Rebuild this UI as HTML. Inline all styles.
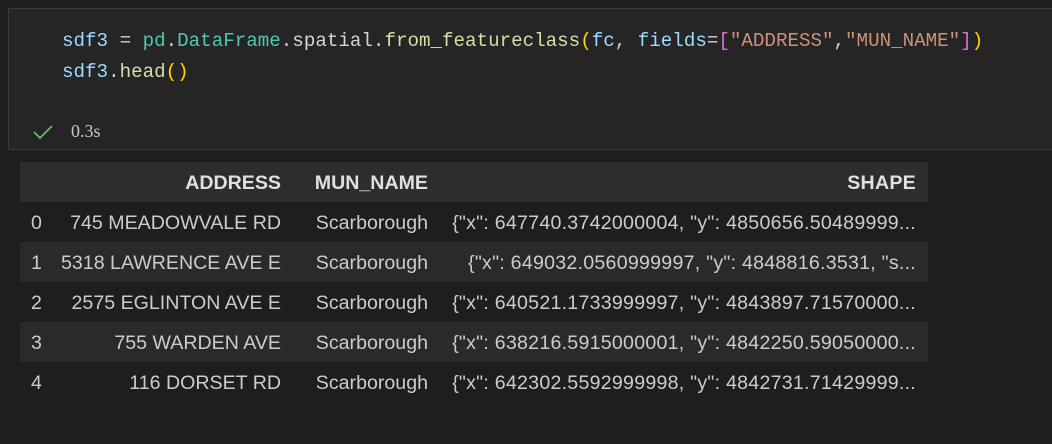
<!DOCTYPE html>
<html><head><style>
body{margin:0;width:1052px;height:444px;background:#1e1e1e;overflow:hidden;position:relative;font-family:"Liberation Sans",sans-serif;}
.cell{position:absolute;left:8px;top:8px;width:1060px;height:140px;background:#252526;border:1px solid #3a3a3a;}
.code{position:absolute;left:62px;top:26px;font-family:"Liberation Mono",monospace;font-size:19.2px;line-height:31px;color:#d4d4d4;white-space:pre;}
.v{color:#9cdcfe}.c{color:#4ec9b0}.f{color:#dcdcaa}.s{color:#ce9178}.p{color:#ffd700}.b{color:#da70d6}
.chk{position:absolute;left:33px;top:124px;}
.time{position:absolute;left:71px;top:121px;font-family:"Liberation Serif",serif;font-size:18px;color:#c8c8c8;}
.tbl{position:absolute;left:20px;top:162px;width:908px;}
.row{position:relative;height:40px;color:#cccccc;font-size:19.6px;}
.row span{position:absolute;top:10px;white-space:nowrap;}
.h{background:#2d2d2d;font-weight:bold;color:#e0e0e0;height:40px}
.alt{background:#2a2a2a}
.i{left:11px}.a{right:647px}.m{right:500px}.sh{right:12px;letter-spacing:0.25px}
</style></head><body>
<div class="cell"></div>
<div class="code"><span class="v">sdf3</span> = <span class="c">pd</span>.<span class="c">DataFrame</span>.spatial.<span class="f">from_featureclass</span><span class="p">(</span><span class="v">fc</span>, <span class="v">fields</span>=<span class="b">[</span><span class="s">"ADDRESS"</span>,<span class="s">"MUN_NAME"</span><span class="b">]</span><span class="p">)</span>
<span class="v">sdf3</span>.<span class="f">head</span><span class="p">()</span></div>
<svg class="chk" width="20" height="16" viewBox="0 0 20 16"><path d="M1 8 L7 14 L19 2" stroke="#6fb56f" stroke-width="1.8" fill="none"/></svg>
<div class="time">0.3s</div>
<div class="tbl">
<div class="row h"><span class="a">ADDRESS</span><span class="m">MUN_NAME</span><span class="sh">SHAPE</span></div>
<div class="row"><span class="i">0</span><span class="a">745 MEADOWVALE RD</span><span class="m">Scarborough</span><span class="sh">{"x": 647740.3742000004, "y": 4850656.50489999...</span></div>
<div class="row alt"><span class="i">1</span><span class="a">5318 LAWRENCE AVE E</span><span class="m">Scarborough</span><span class="sh">{"x": 649032.0560999997, "y": 4848816.3531, "s...</span></div>
<div class="row"><span class="i">2</span><span class="a">2575 EGLINTON AVE E</span><span class="m">Scarborough</span><span class="sh">{"x": 640521.1733999997, "y": 4843897.71570000...</span></div>
<div class="row alt"><span class="i">3</span><span class="a">755 WARDEN AVE</span><span class="m">Scarborough</span><span class="sh">{"x": 638216.5915000001, "y": 4842250.59050000...</span></div>
<div class="row"><span class="i">4</span><span class="a">116 DORSET RD</span><span class="m">Scarborough</span><span class="sh">{"x": 642302.5592999998, "y": 4842731.71429999...</span></div>
</div>
</body></html>
